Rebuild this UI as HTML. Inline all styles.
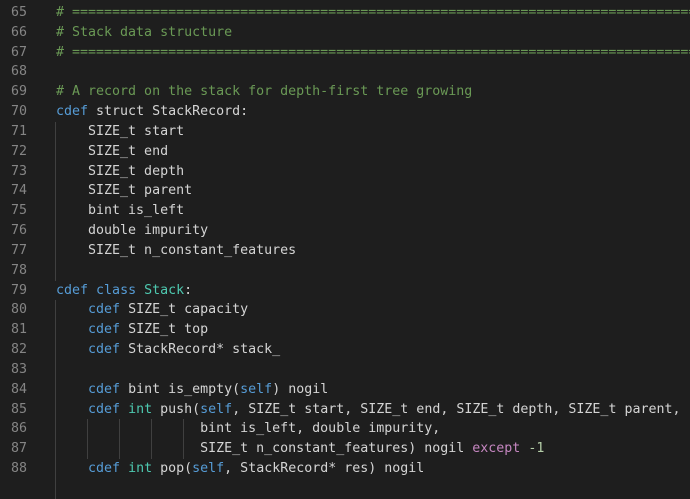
<!DOCTYPE html>
<html><head><meta charset="utf-8"><style>
html,body{margin:0;padding:0;background:#1e1e1e;width:690px;height:484px;overflow:hidden}
#c{position:absolute;left:0;top:3px;font-family:"DejaVu Sans Mono","Liberation Mono",monospace;font-size:13.3px;color:#d4d4d4}
.l{position:relative;height:19.83px;line-height:19.83px;white-space:pre}
.n{position:absolute;left:0;width:27px;text-align:right;color:#858585}
.t{position:absolute;left:56px}
.g{position:absolute;width:1px;background:#404040;top:0;height:19.83px}
.cm{color:#6a9955}.k{color:#569cd6}.ty{color:#4ec9b0}.p{color:#c586c0}.nu{color:#b5cea8}
</style></head><body><div id="c">
<div class="l"><span class="n">65</span><span class="t cm"># ==============================================================================</span></div>
<div class="l"><span class="n">66</span><span class="t cm"># Stack data structure</span></div>
<div class="l"><span class="n">67</span><span class="t cm"># ==============================================================================</span></div>
<div class="l"><span class="n">68</span></div>
<div class="l"><span class="n">69</span><span class="t cm"># A record on the stack for depth-first tree growing</span></div>
<div class="l"><span class="n">70</span><span class="t"><span class="k">cdef</span> struct StackRecord:</span></div>
<div class="l"><span class="n">71</span><i class="g" style="left:55px"></i><span class="t">    SIZE_t start</span></div>
<div class="l"><span class="n">72</span><i class="g" style="left:55px"></i><span class="t">    SIZE_t end</span></div>
<div class="l"><span class="n">73</span><i class="g" style="left:55px"></i><span class="t">    SIZE_t depth</span></div>
<div class="l"><span class="n">74</span><i class="g" style="left:55px"></i><span class="t">    SIZE_t parent</span></div>
<div class="l"><span class="n">75</span><i class="g" style="left:55px"></i><span class="t">    bint is_left</span></div>
<div class="l"><span class="n">76</span><i class="g" style="left:55px"></i><span class="t">    double impurity</span></div>
<div class="l"><span class="n">77</span><i class="g" style="left:55px"></i><span class="t">    SIZE_t n_constant_features</span></div>
<div class="l"><span class="n">78</span><i class="g" style="left:55px"></i></div>
<div class="l"><span class="n">79</span><span class="t"><span class="k">cdef</span> <span class="k">class</span> <span class="ty">Stack</span>:</span></div>
<div class="l"><span class="n">80</span><i class="g" style="left:55px"></i><span class="t">    <span class="k">cdef</span> SIZE_t capacity</span></div>
<div class="l"><span class="n">81</span><i class="g" style="left:55px"></i><span class="t">    <span class="k">cdef</span> SIZE_t top</span></div>
<div class="l"><span class="n">82</span><i class="g" style="left:55px"></i><span class="t">    <span class="k">cdef</span> StackRecord* stack_</span></div>
<div class="l"><span class="n">83</span><i class="g" style="left:55px"></i></div>
<div class="l"><span class="n">84</span><i class="g" style="left:55px"></i><span class="t">    <span class="k">cdef</span> bint is_empty(<span class="k">self</span>) nogil</span></div>
<div class="l"><span class="n">85</span><i class="g" style="left:55px"></i><span class="t">    <span class="k">cdef</span> <span class="ty">int</span> push(<span class="k">self</span>, SIZE_t start, SIZE_t end, SIZE_t depth, SIZE_t parent,</span></div>
<div class="l"><span class="n">86</span><i class="g" style="left:55px"></i><i class="g" style="left:87px"></i><i class="g" style="left:119px"></i><i class="g" style="left:151px"></i><i class="g" style="left:183px"></i><span class="t">                  bint is_left, double impurity,</span></div>
<div class="l"><span class="n">87</span><i class="g" style="left:55px"></i><i class="g" style="left:87px"></i><i class="g" style="left:119px"></i><i class="g" style="left:151px"></i><i class="g" style="left:183px"></i><span class="t">                  SIZE_t n_constant_features) nogil <span class="p">except</span> <span class="nu">-1</span></span></div>
<div class="l"><span class="n">88</span><i class="g" style="left:55px"></i><span class="t">    <span class="k">cdef</span> <span class="ty">int</span> pop(<span class="k">self</span>, StackRecord* res) nogil</span></div>
<div class="l"><i class="g" style="left:55px"></i></div>
</div></body></html>
